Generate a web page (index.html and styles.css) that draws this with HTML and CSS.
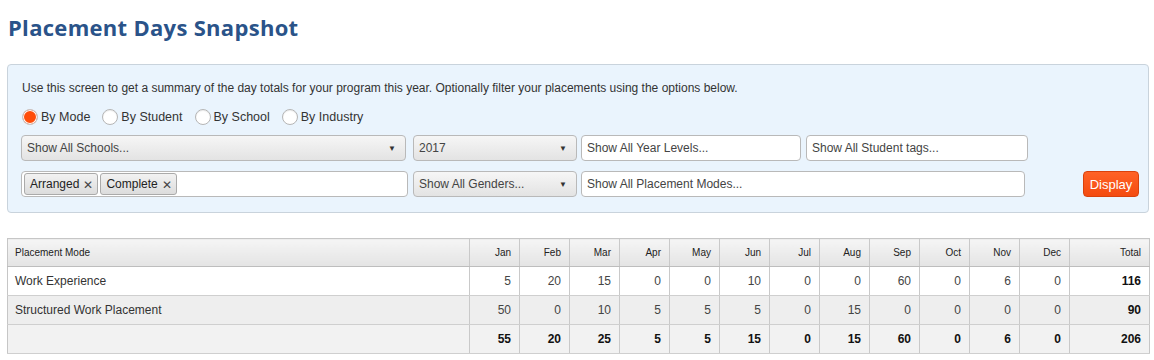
FILE: index.html
```html
<!DOCTYPE html>
<html lang="en">
<head>
    <meta charset="UTF-8">
    <title>Placement Days Snapshot</title>
    <link rel="stylesheet" href="styles.css">
</head>
<body>
    <h1 class="title">Placement Days Snapshot</h1>

    <div class="filters">
        <p class="intro">Use this screen to get a summary of the day totals for your program this year. Optionally filter your placements using the options below.</p>

        <div class="radios">
            <label class="radio"><span class="dot checked"></span>By Mode</label>
            <label class="radio"><span class="dot"></span>By Student</label>
            <label class="radio"><span class="dot"></span>By School</label>
            <label class="radio"><span class="dot"></span>By Industry</label>
        </div>

        <div class="row">
            <div class="select w-schools">Show All Schools...<span class="arrow">&#9660;</span></div>
            <div class="select w-year">2017<span class="arrow">&#9660;</span></div>
            <div class="input w-levels">Show All Year Levels...</div>
            <div class="input w-tags">Show All Student tags...</div>
        </div>

        <div class="row">
            <div class="input w-status">
                <span class="chip">Arranged <span class="x">&#10005;</span></span>
                <span class="chip">Complete <span class="x">&#10005;</span></span>
            </div>
            <div class="select w-gender">Show All Genders...<span class="arrow">&#9660;</span></div>
            <div class="input w-modes">Show All Placement Modes...</div>
            <button class="display">Display</button>
        </div>
    </div>

    <table class="snapshot">
        <thead>
            <tr>
                <th class="mode">Placement Mode</th>
                <th>Jan</th><th>Feb</th><th>Mar</th><th>Apr</th><th>May</th><th>Jun</th>
                <th>Jul</th><th>Aug</th><th>Sep</th><th>Oct</th><th>Nov</th><th>Dec</th>
                <th class="total">Total</th>
            </tr>
        </thead>
        <tbody>
            <tr>
                <td class="mode">Work Experience</td>
                <td>5</td><td>20</td><td>15</td><td>0</td><td>0</td><td>10</td>
                <td>0</td><td>0</td><td>60</td><td>0</td><td>6</td><td>0</td>
                <td class="total strong">116</td>
            </tr>
            <tr class="alt">
                <td class="mode">Structured Work Placement</td>
                <td>50</td><td>0</td><td>10</td><td>5</td><td>5</td><td>5</td>
                <td>0</td><td>15</td><td>0</td><td>0</td><td>0</td><td>0</td>
                <td class="total strong">90</td>
            </tr>
            <tr class="sum">
                <td class="mode"></td>
                <td>55</td><td>20</td><td>25</td><td>5</td><td>5</td><td>15</td>
                <td>0</td><td>15</td><td>60</td><td>0</td><td>6</td><td>0</td>
                <td class="total">206</td>
            </tr>
        </tbody>
    </table>
</body>
</html>
```

FILE: styles.css
```css
body {
    margin: 0;
    padding: 0 5px 0 7px;
    font-family: 'Liberation Sans', Arial, sans-serif;
    font-size: 12px;
    color: #333;
    background: #fff;
}

.title {
    margin: 0;
    padding: 12px 0 0 1px;
    height: 64px;
    box-sizing: border-box;
    font-family: 'Open Sans', 'Liberation Sans', sans-serif;
    font-size: 22px;
    font-weight: 700;
    letter-spacing: 0.3px;
    color: #2a5389;
}

.filters {
    background: #eaf4fd;
    border: 1px solid #c9d3dc;
    border-radius: 4px;
    padding: 16px 13px 15px 13px;
    height: 149px;
    box-sizing: border-box;
}

.intro {
    margin: 0 0 0 1px;
    line-height: 14px;
}

.radios {
    display: flex;
    gap: 12px;
    margin-top: 13px;
    height: 18px;
    align-items: center;
    padding-left: 1px;
}

.radio {
    display: flex;
    align-items: center;
    gap: 3px;
    font-size: 12.5px;
    color: #333;
}

.dot {
    width: 14px;
    height: 14px;
    border-radius: 50%;
    border: 1px solid #b5b5b5;
    background: #fff;
    display: inline-block;
    box-shadow: inset 0 1px 1px rgba(0,0,0,0.08);
}

.dot.checked {
    background: #ff4d0a;
    border-color: #c7c7c7;
    box-shadow: inset 0 0 0 1px #fff;
}

.row {
    display: flex;
    align-items: center;
    margin-top: 9px;
    height: 26px;
}

.row + .row {
    margin-top: 10px;
}

.select, .input {
    height: 26px;
    box-sizing: border-box;
    border: 1px solid #b9b9b9;
    border-radius: 4px;
    padding: 0 5px;
    display: flex;
    align-items: center;
    color: #444;
    font-size: 12px;
    position: relative;
}

.select {
    background: linear-gradient(#f6f6f6, #e3e3e3);
}

.input {
    background: #fff;
}

.arrow {
    position: absolute;
    right: 9px;
    top: 8px;
    font-size: 8px;
    color: #333;
}

.w-schools { width: 385px; margin-right: 7px; }
.w-year { width: 164px; margin-right: 4px; }
.w-levels { width: 220px; margin-right: 5px; }
.w-tags { width: 222px; }

.w-status { width: 387px; margin-right: 5px; padding: 0 2px; gap: 2px; }
.w-gender { width: 164px; margin-right: 4px; }
.w-modes { width: 444px; }

.chip {
    display: inline-flex;
    align-items: center;
    height: 22px;
    box-sizing: border-box;
    padding: 0 4px 0 5px;
    border: 1px solid #aaa;
    border-radius: 3px;
    background: linear-gradient(#f2f2f2, #dcdcdc);
    color: #222;
    gap: 4px;
}

.x {
    font-size: 12px;
    color: #444;
    margin-top: 2px;
}

.display {
    margin-left: auto;
    margin-right: -4px;
    width: 56px;
    height: 26px;
    border: 1px solid #d9410c;
    border-radius: 4px;
    background: linear-gradient(#ff6226, #f44b10);
    color: #fff;
    font-family: 'Liberation Sans', Arial, sans-serif;
    font-size: 13px;
    padding: 0;
}

.snapshot {
    margin-top: 25px;
    width: 1142px;
    border-collapse: collapse;
    table-layout: fixed;
    border: 1px solid #c6c6c6;
}

.snapshot th, .snapshot td {
    border-left: 1px solid #c9c9c9;
    text-align: right;
    padding: 0 8px;
}

.snapshot th {
    height: 27px;
    font-size: 10px;
    font-weight: normal;
    color: #222;
    background: linear-gradient(#f5f5f5, #e4e4e4);
    border-bottom: 1px solid #bdbdbd;
    border-top: 1px solid #c6c6c6;
}

.snapshot td {
    height: 28px;
    font-size: 12px;
    color: #444;
    border-bottom: 1px solid #cfcfcf;
}

.snapshot th.mode, .snapshot td.mode {
    text-align: left;
    width: 446px;
    padding-left: 7px;
    border-left: none;
}

.snapshot th.mode { color: #222; }
.snapshot td.mode { color: #333; }

.snapshot th.total { width: 63px; }

.snapshot tr.alt td {
    background: #eeeeee;
}

.snapshot tr.sum td {
    background: #f2f2f2;
    font-weight: bold;
    color: #111;
}

.snapshot td.strong {
    font-weight: bold;
    color: #111;
}

.snapshot th:not(.mode):not(.total) { width: 33px; }
```
